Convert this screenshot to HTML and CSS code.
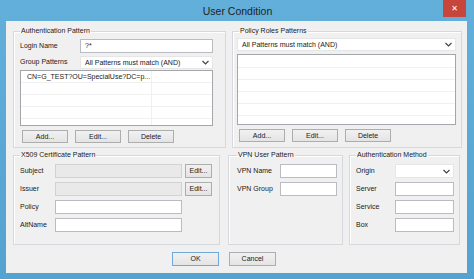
FILE: index.html
```html
<!DOCTYPE html>
<html lang="en">
<head>
  <meta charset="UTF-8" />
  <title>User Condition</title>
  <link rel="stylesheet" href="styles.css">
</head>
<body>

<div class="window">
  <div class="titlebar">
    <span class="title">User Condition</span>
    <span class="close-btn">&#x2715;</span>
  </div>

  <div class="client">
    <div class="top-row">
      <fieldset class="group">
        <legend>Authentication Pattern</legend>
        <div class="group-body auth-pattern">
          <div class="field-row">
            <label class="lbl lbl-60">Login Name</label>
            <div class="textbox w-133">?*</div>
          </div>
          <div class="field-row gap-top-2">
            <label class="lbl lbl-60">Group Patterns</label>
            <div class="combo w-133">
              <span>All Patterns must match (AND)</span>
              <svg class="chev" width="7" height="5" viewBox="0 0 7 5"><polyline points="0.5,1 3.5,4 6.5,1" fill="none" stroke="#444" stroke-width="1.2"/></svg>
            </div>
          </div>
          <div class="listbox list-left">
            <div class="list-row"><span class="cell">CN=G_TEST?OU=SpecialUse?DC=p...</span><span class="cell-rest"></span></div>
            <div class="list-row"><span class="cell"></span><span class="cell-rest"></span></div>
            <div class="list-row"><span class="cell"></span><span class="cell-rest"></span></div>
            <div class="list-row"><span class="cell"></span><span class="cell-rest"></span></div>
            <div class="list-row"><span class="cell"></span><span class="cell-rest"></span></div>
          </div>
          <div class="btn-row">
            <button class="btn">Add...</button>
            <button class="btn">Edit...</button>
            <button class="btn">Delete</button>
          </div>
        </div>
      </fieldset>

      <fieldset class="group">
        <legend>Policy Roles Patterns</legend>
        <div class="group-body policy-pattern">
          <div class="combo w-219">
            <span>All Patterns must match (AND)</span>
            <svg class="chev" width="7" height="5" viewBox="0 0 7 5"><polyline points="0.5,1 3.5,4 6.5,1" fill="none" stroke="#444" stroke-width="1.2"/></svg>
          </div>
          <div class="listbox list-right">
            <div class="list-row"></div>
            <div class="list-row"></div>
            <div class="list-row"></div>
            <div class="list-row"></div>
            <div class="list-row"></div>
            <div class="list-row"></div>
          </div>
          <div class="btn-row">
            <button class="btn">Add...</button>
            <button class="btn">Edit...</button>
            <button class="btn">Delete</button>
          </div>
        </div>
      </fieldset>
    </div>

    <div class="bottom-row">
      <fieldset class="group">
        <legend>X509 Certificate Pattern</legend>
        <div class="group-body form-grid x509-grid">
          <label class="lbl">Subject</label>
          <div class="textbox disabled"></div>
          <button class="btn btn-small">Edit...</button>

          <label class="lbl">Issuer</label>
          <div class="textbox disabled"></div>
          <button class="btn btn-small">Edit...</button>

          <label class="lbl">Policy</label>
          <div class="textbox"></div>
          <span></span>

          <label class="lbl">AltName</label>
          <div class="textbox"></div>
          <span></span>
        </div>
      </fieldset>

      <fieldset class="group group-vpn">
        <legend>VPN User Pattern</legend>
        <div class="group-body form-grid vpn-grid">
          <label class="lbl">VPN Name</label>
          <div class="textbox"></div>
          <label class="lbl">VPN Group</label>
          <div class="textbox"></div>
        </div>
      </fieldset>

      <fieldset class="group">
        <legend>Authentication Method</legend>
        <div class="group-body form-grid method-grid">
          <label class="lbl">Origin</label>
          <div class="combo">
            <span></span>
            <svg class="chev" width="7" height="5" viewBox="0 0 7 5"><polyline points="0.5,1 3.5,4 6.5,1" fill="none" stroke="#444" stroke-width="1.2"/></svg>
          </div>
          <label class="lbl">Server</label>
          <div class="textbox"></div>
          <label class="lbl">Service</label>
          <div class="textbox"></div>
          <label class="lbl">Box</label>
          <div class="textbox"></div>
        </div>
      </fieldset>
    </div>

    <div class="dialog-buttons">
      <button class="btn btn-dialog btn-default">OK</button>
      <button class="btn btn-dialog">Cancel</button>
    </div>
  </div>
</div>

</body>
</html>
```

FILE: styles.css
```css
* {
  margin: 0;
  padding: 0;
  box-sizing: border-box;
}
body {
  font-family: "Liberation Sans", Arial, sans-serif;
  font-size: 7px;
  color: #1a1a1a;
  background: #56a6d3;
}

.window {
  width: 474px;
  height: 279px;
  background: linear-gradient(#62afda, #53a3d0);
  display: flex;
  flex-direction: column;
  padding: 0 7px 6px 6px;
}

.titlebar {
  height: 21px;
  display: flex;
  align-items: center;
  justify-content: center;
  position: relative;
}
.title {
  font-size: 10.5px;
  color: #222;
  margin-left: 2px;
}
.close-btn {
  position: absolute;
  top: 0;
  right: 1px;
  width: 23px;
  height: 17px;
  background: #c7453b;
  color: #fff;
  font-family: "DejaVu Sans", sans-serif;
  font-size: 8px;
  font-weight: bold;
  display: flex;
  align-items: center;
  justify-content: center;
}

.client {
  flex: 1;
  background: #f0f0f0;
  padding: 5px 5px 0 7px;
}

.top-row {
  display: grid;
  grid-template-columns: 213px 230px;
  column-gap: 6px;
  height: 122px;
}
.bottom-row {
  display: grid;
  grid-template-columns: 207px 117px 111px;
  column-gap: 6px;
  height: 95px;
  margin-top: 2px;
}
.bottom-row .group-vpn {
  margin: 0 0 0 2px;
}

.group {
  border: 1px solid #d5d9dd;
  box-shadow: inset 1px 1px 0 #fff;
  padding: 0 6px;
  min-width: 0;
}
.group legend {
  padding: 0 1px;
  line-height: 10px;
  color: #1a1a1a;
}

.auth-pattern {
  padding-top: 3px;
}
.policy-pattern {
  padding-top: 2px;
  margin-left: -2px;
}

.field-row {
  display: flex;
  align-items: center;
}
.gap-top-2 {
  margin-top: 2px;
}
.lbl {
  display: block;
  line-height: 14px;
  white-space: nowrap;
}
.lbl-60 {
  width: 60px;
}
.w-133 {
  width: 133px;
}
.w-219 {
  width: 219px;
}

.textbox {
  height: 14px;
  background: #fff;
  border: 1px solid #b9bcc2;
  padding: 0 4px;
  line-height: 12px;
}
.textbox.disabled {
  background: #e9e9e9;
  border-color: #d2d2d2;
}

.combo {
  height: 13px;
  background: #fff;
  border: 1px solid #e6e6e6;
  display: flex;
  align-items: center;
  justify-content: space-between;
  padding: 0 3px 0 4px;
  line-height: 11px;
  white-space: nowrap;
}
.combo .chev {
  flex-shrink: 0;
}

.listbox {
  background: #fff;
  border: 1px solid #a3a6ab;
  overflow: hidden;
}
.list-left {
  width: 193px;
  height: 56px;
  margin-top: 1px;
}
.list-right {
  width: 219px;
  height: 71px;
  margin-top: 3px;
  padding-top: 1px;
}
.list-row {
  height: 12px;
  border-bottom: 1px solid #f0f0f0;
  display: flex;
}
.cell {
  width: 131px;
  flex-shrink: 0;
  border-right: 1px solid #f0f0f0;
  padding-left: 6px;
  line-height: 11px;
  white-space: nowrap;
}
.cell-rest {
  flex: 1;
}

.btn-row {
  display: flex;
  gap: 7px;
  margin: 4px 0 0 2px;
}
.btn {
  font-family: inherit;
  font-size: inherit;
  color: #1a1a1a;
  height: 13px;
  width: 46px;
  border: 1px solid #adadad;
  background: linear-gradient(#f1f1f1, #e4e4e4);
  line-height: 11px;
  text-align: center;
}

.form-grid {
  display: grid;
  grid-auto-rows: 14px;
  row-gap: 4px;
  padding-top: 4px;
}
.x509-grid {
  grid-template-columns: 35px 127px 27px;
  column-gap: 0;
}
.x509-grid .btn-small {
  width: 27px;
  height: 14px;
  margin-left: 3px;
  line-height: 12px;
}
.vpn-grid {
  grid-template-columns: 43px 57px;
}
.group-vpn {
  padding-left: 8px;
}
.method-grid {
  grid-template-columns: 39px 59px;
}
.method-grid .combo {
  height: 14px;
}

.dialog-buttons {
  display: flex;
  gap: 10px;
  margin-top: 7px;
  padding-left: 159px;
}
.btn-dialog {
  width: 47px;
  height: 14px;
  line-height: 12px;
}
.btn-default {
  border-color: #6fa9dc;
}
```
